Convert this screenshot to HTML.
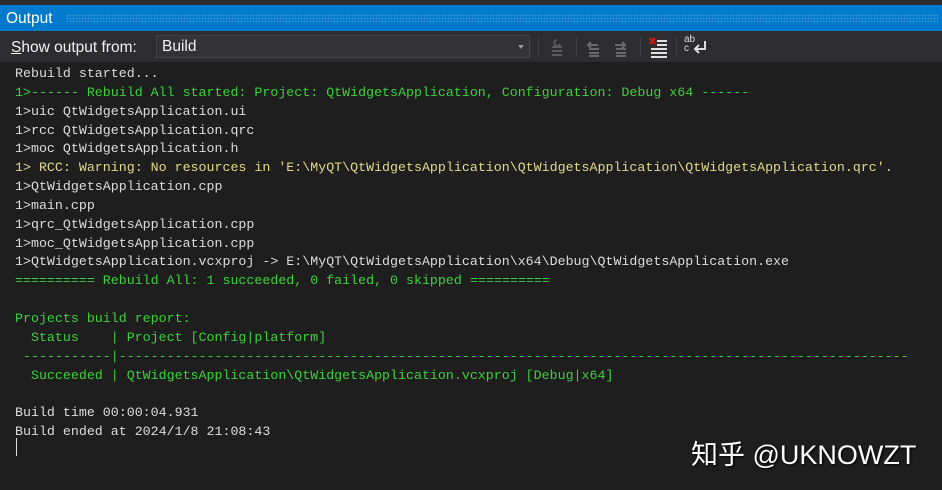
<!DOCTYPE html>
<html><head><meta charset="utf-8"><style>
body{margin:0;width:942px;height:490px;background:#1e1e1e;overflow:hidden;position:relative;font-family:"Liberation Sans",sans-serif}
.top{position:absolute;left:0;top:0;width:942px;height:5px;background:#2d2d30}
.title{position:absolute;left:0;top:5px;width:942px;height:26px;background:#007acc;color:#fff;font-size:15.5px;line-height:27px}
.title span{padding-left:6px}
.dots{position:absolute;left:66px;right:4px;top:9px;height:8px;background-image:radial-gradient(#3a92d4 0.8px,transparent 1px);background-size:3px 3px}
.tb{position:absolute;left:0;top:31px;width:942px;height:31px;background:#2d2d30;color:#f1f1f1;font-size:15.5px}
.lbl{position:absolute;left:11px;top:8px}
.combo{position:absolute;left:156px;top:4px;width:374px;height:23px;background:#333337;border:1px solid #434346;box-sizing:border-box;color:#f1f1f1;line-height:21px;padding-left:5px}
.arr{position:absolute;right:5px;top:9px;border:3px solid transparent;border-top:4px solid #999}
.sep{position:absolute;top:6px;width:1px;height:20px;background:#3f3f46}
.out{position:absolute;left:15px;top:65px;font-family:"Liberation Mono",monospace;font-size:13.3px;line-height:18.85px;color:#dcdcdc;white-space:pre}
.g{color:#3fcf3f}.y{color:#e2d98c}
.wm{position:absolute;left:691px;top:433px;color:#fff;font-family:"Liberation Sans","Noto Sans CJK SC",sans-serif;font-size:27px;text-shadow:1px 1px 2px #000}
.cur{position:absolute;left:16px;top:438px;width:1px;height:18px;background:#dcdcdc}
</style></head><body>
<div class="top"></div>
<div class="title"><span>Output</span><div class="dots"></div></div>
<div class="tb">
<div class="lbl"><u>S</u>how output from:</div>
<div class="combo">Build<div class="arr"></div></div>
<div class="sep" style="left:538px"></div>
<svg style="position:absolute;left:548px;top:6px" width="20" height="20"><g stroke="#5a5a5e" stroke-width="2" fill="none"><path d="M4 10h10M4 14h10M4 18h10"/><path d="M9 3a3 3 0 1 0 3 4"/></g></svg>
<div class="sep" style="left:576px"></div>
<svg style="position:absolute;left:585px;top:6px" width="20" height="20"><g stroke="#6a6a6e" stroke-width="2" fill="none"><path d="M4 12h10M4 16h10M4 19h10M6 5l-3 3 3 3M3 8h10"/></g></svg>
<svg style="position:absolute;left:612px;top:6px" width="20" height="20"><g stroke="#6a6a6e" stroke-width="2" fill="none"><path d="M4 12h10M4 16h10M4 19h10M10 5l3 3-3 3M3 8h10"/></g></svg>
<div class="sep" style="left:640px"></div>
<svg style="position:absolute;left:648px;top:5px" width="22" height="22"><g stroke="#e0e0e0" stroke-width="2"><path d="M9 5h10M9 9h10M3 13h16M3 17h16M3 21h16"/></g><path d="M2 2l5 6M7 2l-5 6" stroke="#e51400" stroke-width="2"/></svg>
<div class="sep" style="left:676px"></div>
<div style="position:absolute;left:684px;top:4px;color:#ddd;font-size:10px;line-height:9px">ab<br>c</div>
<svg style="position:absolute;left:692px;top:8px" width="16" height="16"><path d="M13 2v8H4M7 6l-4 4 4 4" stroke="#ddd" stroke-width="2" fill="none"/></svg>
</div>
<div class="out">Rebuild started...
<span class="g">1>------ Rebuild All started: Project: QtWidgetsApplication, Configuration: Debug x64 ------</span>
1>uic QtWidgetsApplication.ui
1>rcc QtWidgetsApplication.qrc
1>moc QtWidgetsApplication.h
<span class="y">1> RCC: Warning: No resources in 'E:\MyQT\QtWidgetsApplication\QtWidgetsApplication\QtWidgetsApplication.qrc'.</span>
1>QtWidgetsApplication.cpp
1>main.cpp
1>qrc_QtWidgetsApplication.cpp
1>moc_QtWidgetsApplication.cpp
1>QtWidgetsApplication.vcxproj -> E:\MyQT\QtWidgetsApplication\x64\Debug\QtWidgetsApplication.exe
<span class="g">========== Rebuild All: 1 succeeded, 0 failed, 0 skipped ==========</span>

<span class="g">Projects build report:
  Status    | Project [Config|platform]
 -----------|---------------------------------------------------------------------------------------------------
  Succeeded | QtWidgetsApplication\QtWidgetsApplication.vcxproj [Debug|x64]</span>

Build time 00:00:04.931
Build ended at 2024/1/8 21:08:43</div>
<div class="cur"></div>
<div class="wm">知乎 @UKNOWZT</div>
</body></html>
